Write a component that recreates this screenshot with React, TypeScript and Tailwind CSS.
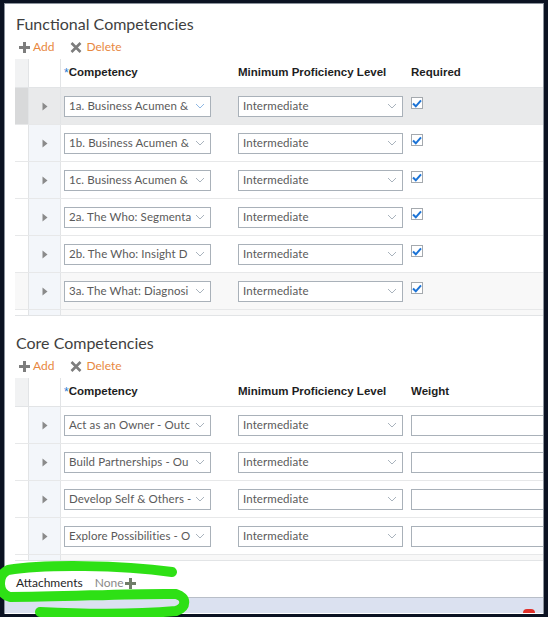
import type { ReactNode } from "react";

const functionalRows = [
  "1a. Business Acumen &",
  "1b. Business Acumen &",
  "1c. Business Acumen &",
  "2a. The Who: Segmenta",
  "2b. The Who: Insight D",
  "3a. The What: Diagnosi",
];

const coreRows = [
  "Act as an Owner - Outc",
  "Build Partnerships - Ou",
  "Develop Self & Others -",
  "Explore Possibilities - O",
];

function Chevron({ color }: { color: string }) {
  return (
    <svg width="10" height="6" viewBox="0 0 10 6" className="shrink-0">
      <polyline points="1,1 5,5 9,1" fill="none" stroke={color} strokeWidth="1" />
    </svg>
  );
}

function Select({ text, wide, focused }: { text: string; wide?: boolean; focused?: boolean }) {
  return (
    <div
      className={`h-[21px] border border-[#a9b1b9] bg-white flex items-center pl-[4px] pr-[5px] ${
        wide ? "w-[165px]" : "w-[147px]"
      }`}
    >
      <span className="whitespace-nowrap text-[11.5px] text-[#5a5a5a] leading-[16px] tracking-[0.1px]">{text}</span>
      <span className="ml-auto pl-[1px]">
        <Chevron color={focused ? "#8fb8e4" : "#a9b3bd"} />
      </span>
    </div>
  );
}

function Checkbox() {
  return (
    <div className="w-[12px] h-[12px] border border-[#a4a9ae] bg-white flex items-center justify-center">
      <svg width="10" height="9" viewBox="0 0 10 9">
        <polyline points="1,4.5 3.8,7.3 9,1.3" fill="none" stroke="#1b73d6" strokeWidth="2" />
      </svg>
    </div>
  );
}

function Toolbar() {
  return (
    <div className="mt-[5px] h-[16px] flex items-center text-[12px] text-[#e8883f]">
      <svg width="11" height="11" viewBox="0 0 11 11" className="ml-[4px]">
        <path d="M4 0h3v4h4v3H7v4H4V7H0V4h4z" fill="#7d7d7d" />
      </svg>
      <span className="ml-[3px]">Add</span>
      <svg width="12" height="11" viewBox="0 0 12 11" className="ml-[16px]">
        <path d="M1.5 1 L10.5 10 M10.5 1 L1.5 10" stroke="#7d7d7d" strokeWidth="2.6" />
      </svg>
      <span className="ml-[4px]">Delete</span>
    </div>
  );
}

function Row({
  selected,
  striped,
  children,
}: {
  selected?: boolean;
  striped?: boolean;
  children: ReactNode;
}) {
  const rowBg = selected ? "bg-[#e9eaeb]" : striped ? "bg-[#f8f8f8]" : "bg-white";
  return (
    <div className={`h-[37px] flex border-b border-[#e7e8e9] ${rowBg}`}>
      <div className={`w-[14px] shrink-0 border-r border-[#e2e4e6] ${selected ? "bg-[#d8d9da]" : ""}`} />
      <div
        className={`w-[32px] shrink-0 border-r border-[#e2e4e6] flex items-center justify-center ${
          selected ? "" : "bg-[#f3f6fa]"
        }`}
      >
        <svg width="6" height="9" viewBox="0 0 6 9">
          <path d="M0.5 0.5 L5.5 4.5 L0.5 8.5z" fill="#8a8a8a" />
        </svg>
      </div>
      {children}
    </div>
  );
}

function Header({ last }: { last: string }) {
  return (
    <div className="h-[29px] flex border-b border-[#e2e4e6] bg-white font-['Liberation_Sans',Arial,sans-serif] font-bold text-[11.5px] text-[#1e1e1e]">
      <div className="w-[14px] shrink-0 border-r border-[#e2e4e6] bg-[#f1f2f3]" />
      <div className="w-[32px] shrink-0 border-r border-[#e2e4e6]" />
      <div className="w-[173px] shrink-0 pl-[3px] flex items-center">
        <span className="text-[#1f78d1] font-normal text-[12px]">*</span>
        Competency
      </div>
      <div className="w-[174px] shrink-0 pl-[4px] flex items-center">Minimum Proficiency Level</div>
      <div className="flex-1 pl-[3px] flex items-center">{last}</div>
    </div>
  );
}

function Strip() {
  return (
    <div className="h-[6px] flex border-b border-[#e2e4e6] bg-[#f8f8f8]">
      <div className="w-[14px] shrink-0 border-r border-[#e2e4e6] bg-white" />
      <div className="w-[32px] shrink-0 border-r border-[#e2e4e6] bg-[#f3f6fa]" />
      <div className="flex-1" />
    </div>
  );
}

function Title({ children, className }: { children: ReactNode; className?: string }) {
  return (
    <div className={`h-[20px] flex items-center pl-[1px] text-[16px] text-[#3f3f3f] ${className ?? ""}`}>
      {children}
    </div>
  );
}

export default function App() {
  return (
    <div className="relative w-[548px] h-[617px] overflow-hidden bg-[#0b1222] pl-[4px] pt-[3px] pr-[4px] pb-[3px] font-['Lato','Open_Sans',sans-serif]">
      <div className="h-full flex flex-col border-l border-t border-r border-[#8b929c] bg-white">
        <div className="flex-1 overflow-hidden pl-[10px] pt-[10px]">
          <Title>Functional Competencies</Title>
          <Toolbar />
          <div className="mt-[4px] w-[560px]">
            <Header last="Required" />
            {functionalRows.map((r, i) => (
              <Row key={r} selected={i === 0} striped={i === 5}>
                <div className="w-[173px] shrink-0 pl-[3px] flex items-center">
                  <Select text={r} focused={i === 0} />
                </div>
                <div className="w-[174px] shrink-0 pl-[4px] flex items-center">
                  <Select text="Intermediate" wide />
                </div>
                <div className="flex-1 pl-[3px] pt-[9px]">
                  <Checkbox />
                </div>
              </Row>
            ))}
            <Strip />
          </div>

          <Title className="mt-[17px]">Core Competencies</Title>
          <Toolbar />
          <div className="mt-[4px] w-[560px]">
            <Header last="Weight" />
            {coreRows.map((r) => (
              <Row key={r}>
                <div className="w-[173px] shrink-0 pl-[3px] flex items-center">
                  <Select text={r} />
                </div>
                <div className="w-[174px] shrink-0 pl-[4px] flex items-center">
                  <Select text="Intermediate" wide />
                </div>
                <div className="flex-1 pl-[3px] flex items-center">
                  <div className="h-[21px] w-[150px] border border-[#a9b1b9] bg-white" />
                </div>
              </Row>
            ))}
            <Strip />
          </div>

          <div className="mt-[14px] h-[16px] flex items-center pl-[1px] text-[12px]">
            <span className="text-[#1f1f1f]">Attachments</span>
            <span className="ml-[12px] text-[#8a8a8a]">None</span>
            <svg width="11" height="11" viewBox="0 0 11 11" className="ml-[2px]">
              <path d="M4 0h3v4h4v3H7v4H4V7H0V4h4z" fill="#6f7d68" />
            </svg>
          </div>
        </div>
        <div className="h-[16px] border-t border-[#b8bec8] bg-[#dbe1f0] relative">
          <div className="absolute right-[8px] bottom-0 w-[12px] h-[4px] rounded-t-full bg-[#e0302a]" />
        </div>
        <div className="h-[1px] bg-white" />
      </div>

      {/* green highlighter scribble over the attachments line */}
      <svg className="absolute inset-0 pointer-events-none" width="548" height="617" viewBox="0 0 548 617">
        <path
          d="M172 572 C120 565, 45 564, 8 570 C-3 575, -3 594, 10 597 C60 597, 140 593, 176 594 C187 597, 187 607, 176 611 C130 615, 80 614, 40 612"
          fill="none"
          stroke="#2ee015"
          strokeWidth="10"
          strokeLinecap="round"
          strokeLinejoin="round"
        />
      </svg>
    </div>
  );
}
